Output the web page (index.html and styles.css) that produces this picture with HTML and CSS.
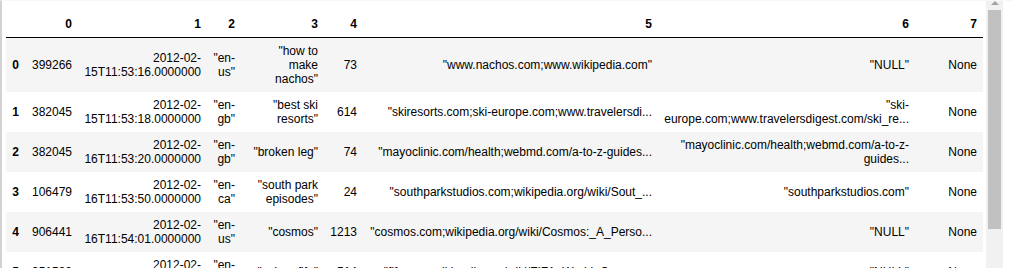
FILE: index.html
```html
<!DOCTYPE html>
<html>
<head>
<meta charset="utf-8">
<link rel="stylesheet" href="styles.css">
</head>
<body>
<div class="frame">
  <div class="output">
    <table class="dataframe">
      <thead>
        <tr><th class="w-idx"></th><th class="w-c0">0</th><th class="w-c1">1</th><th class="w-c2">2</th><th class="w-c3">3</th><th class="w-c4">4</th><th class="w-c5">5</th><th class="w-c6">6</th><th class="w-c7">7</th></tr>
      </thead>
      <tbody>
        <tr><th>0</th><td>399266</td><td>2012-02-15T11:53:16.0000000</td><td>"en-us"</td><td>"how to make nachos"</td><td>73</td><td>"www.nachos.com;www.wikipedia.com"</td><td>"NULL"</td><td>None</td></tr>
        <tr><th>1</th><td>382045</td><td>2012-02-15T11:53:18.0000000</td><td>"en-gb"</td><td>"best ski resorts"</td><td>614</td><td>"skiresorts.com;ski-europe.com;www.travelersdi...</td><td>"ski-europe.com;www.travelersdigest.com/ski_re...</td><td>None</td></tr>
        <tr><th>2</th><td>382045</td><td>2012-02-16T11:53:20.0000000</td><td>"en-gb"</td><td>"broken leg"</td><td>74</td><td>"mayoclinic.com/health;webmd.com/a-to-z-guides...</td><td>"mayoclinic.com/health;webmd.com/a-to-z-guides...</td><td>None</td></tr>
        <tr><th>3</th><td>106479</td><td>2012-02-16T11:53:50.0000000</td><td>"en-ca"</td><td>"south park episodes"</td><td>24</td><td>"southparkstudios.com;wikipedia.org/wiki/Sout_...</td><td>"southparkstudios.com"</td><td>None</td></tr>
        <tr><th>4</th><td>906441</td><td>2012-02-16T11:54:01.0000000</td><td>"en-us"</td><td>"cosmos"</td><td>1213</td><td>"cosmos.com;wikipedia.org/wiki/Cosmos:_A_Perso...</td><td>"NULL"</td><td>None</td></tr>
        <tr><th>5</th><td>351530</td><td>2012-02-16T11:54:10.0000000</td><td>"en-us"</td><td>"yahoo fifa"</td><td>514</td><td>"fifa.com;wikipedia.org/wiki/FIFA_World_Cup_ga...</td><td>"NULL"</td><td>None</td></tr>
      </tbody>
    </table>
  </div>
  <div class="scrollbar">
    <div class="arrow"></div>
    <div class="thumb"></div>
  </div>
</div>
</body>
</html>
```
FILE: styles.css
```css
html, body {
  margin: 0;
  padding: 0;
  background: #fff;
}
body {
  font-family: "Liberation Sans", Arial, sans-serif;
  font-size: 12px;
  color: #000;
}
.frame {
  display: flex;
  height: 268px;
  overflow: hidden;
  border-left: 2px solid #d2d2d2;
  border-top: 1px solid #f7f7f7;
  box-sizing: border-box;
}
.output {
  flex: 0 0 984px;
  width: 984px;
  padding: 10px 3px 0 4px;
  box-sizing: border-box;
  overflow: hidden;
}
.dataframe {
  width: 977px;
  table-layout: fixed;
  border-collapse: collapse;
  border-spacing: 0;
  border: none;
}
.dataframe thead {
  border-bottom: 1px solid #000;
  vertical-align: bottom;
}
.dataframe th,
.dataframe td {
  box-sizing: border-box;
  text-align: right;
  vertical-align: middle;
  padding: 6px;
  line-height: 14px;
  white-space: normal;
  border: none;
  overflow: hidden;
}
.dataframe th {
  font-weight: bold;
}
.dataframe tbody tr:nth-child(odd) {
  background: #f5f5f5;
}
.w-idx { width: 19px; }
.w-c0 { width: 53px; }
.w-c1 { width: 129px; }
.w-c2 { width: 34px; }
.w-c3 { width: 83px; }
.w-c4 { width: 39px; }
.w-c5 { width: 295px; }
.w-c6 { width: 257px; }
.w-c7 { width: 68px; }
.scrollbar {
  flex: 0 0 17px;
  width: 17px;
  background: #f1f1f1;
  display: flex;
  flex-direction: column;
  align-items: center;
}
.arrow {
  width: 0;
  height: 0;
  border-left: 4px solid transparent;
  border-right: 4px solid transparent;
  border-bottom: 4px solid #a3a3a3;
}
.thumb {
  margin-top: 5px;
  width: 13px;
  height: 219px;
  background: #c1c1c1;
}
```
